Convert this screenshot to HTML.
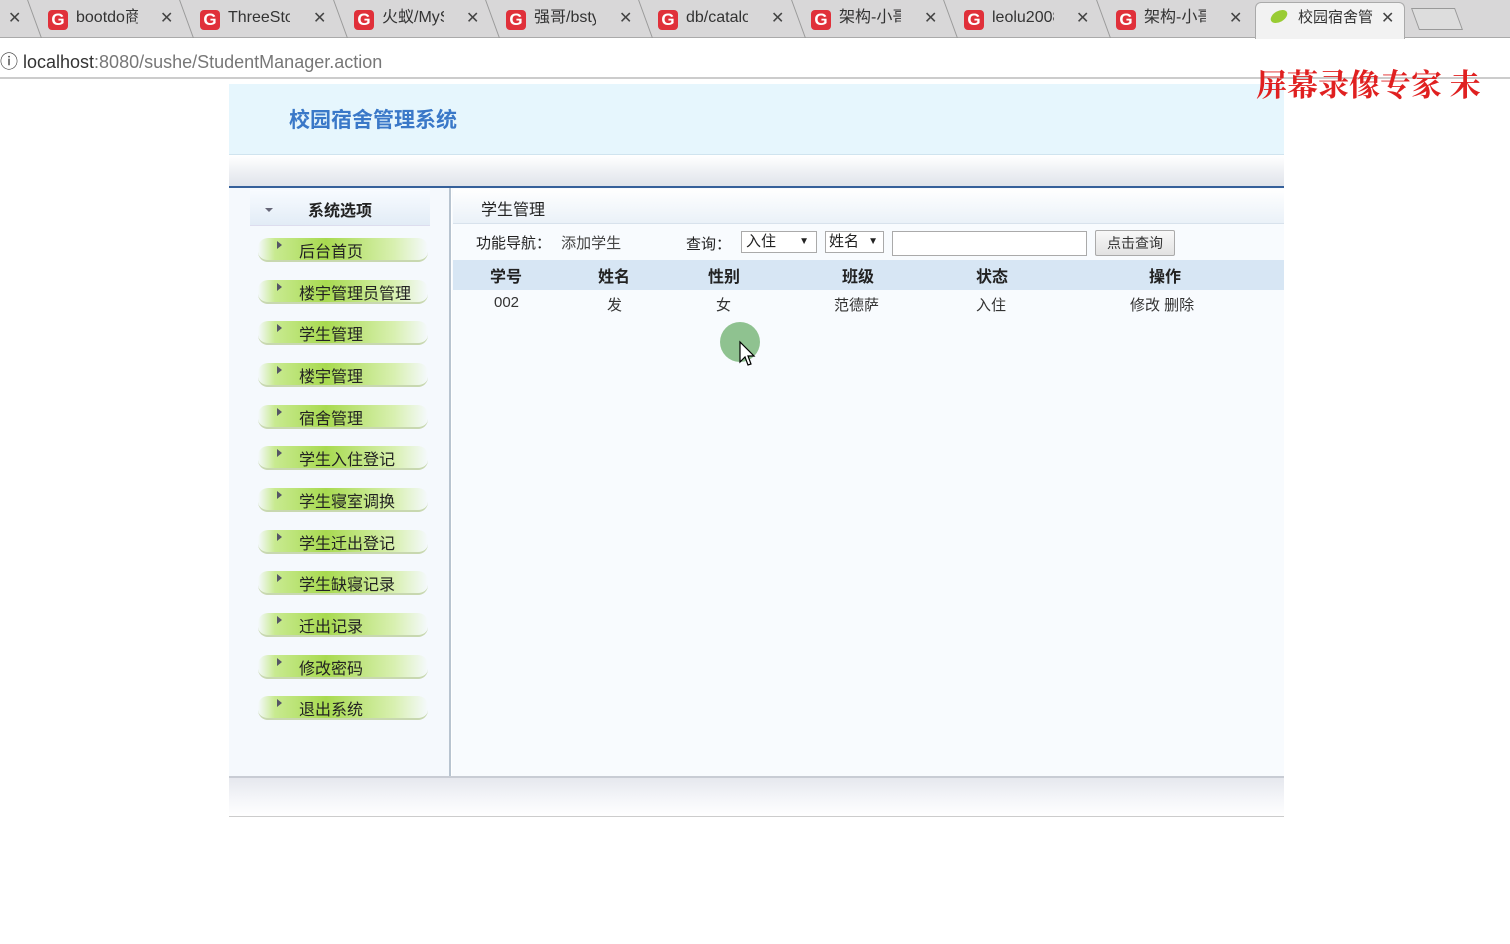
<!DOCTYPE html>
<html><head><meta charset="utf-8"><style>
*{margin:0;padding:0;box-sizing:border-box}
body{width:1510px;height:944px;background:#fff;font-family:"Liberation Sans","Noto Sans CJK SC",sans-serif;position:relative;overflow:hidden;color:#222}
.abs{position:absolute}
.tabbar{left:0;top:0;width:1510px;height:38px;background:#d8d7d8;border-bottom:1px solid #aaa}
.tab{position:absolute;top:4px;height:34px;font-size:16px;color:#333;line-height:28px;white-space:nowrap;width:90px;overflow:hidden}
.g{display:inline-block;width:20px;height:20px;background:#e0303a;border-radius:4px;color:#fff;font-weight:bold;font-size:17px;line-height:20px;text-align:center;vertical-align:-3px;margin-right:8px}
.x{position:absolute;font-size:16px;color:#444}
.sep{position:absolute;top:0;width:1px;height:38px;background:#999;transform:skewX(20deg)}
.addr{left:0;top:39px;width:1510px;height:40px;background:#fff;border-bottom:2px solid #ccc}
.menu{position:absolute;left:258px;width:170px;height:30px;font-size:16px;color:#222}
.menu .bar{position:absolute;left:0;top:4px;width:170px;height:24px;background:linear-gradient(90deg,rgba(255,255,255,0),#c8ea90 10%,#a8da50 40%,#d8f0b0 80%,rgba(255,255,255,0));border-bottom:2px solid #c8d8b0;border-radius:10px}
.menu span{position:absolute;left:41px;top:4px}
.menu i{position:absolute;left:19px;top:7px;width:0;height:0;border-left:5px solid #556;border-top:4px solid transparent;border-bottom:4px solid transparent}
.th{position:absolute;top:263px;font-weight:bold;font-size:16px;color:#222}
.td{position:absolute;top:294px;font-size:15px;color:#333}
</style></head><body>
<div class="abs tabbar">
 <div class="x" style="left:8px;top:8px">✕</div>
 <div class="sep" style="left:34px"></div><div class="sep" style="left:186px"></div><div class="sep" style="left:340px"></div><div class="sep" style="left:492px"></div><div class="sep" style="left:645px"></div><div class="sep" style="left:798px"></div><div class="sep" style="left:950px"></div><div class="sep" style="left:1103px"></div>
 <div class="tab" style="left:48px"><span class="g">G</span>bootdo商</div><div class="x" style="left:160px;top:8px">✕</div>
 <div class="tab" style="left:200px"><span class="g">G</span>ThreeStor</div><div class="x" style="left:313px;top:8px">✕</div>
 <div class="tab" style="left:354px"><span class="g">G</span>火蚁/MyS</div><div class="x" style="left:466px;top:8px">✕</div>
 <div class="tab" style="left:506px"><span class="g">G</span>强哥/bsty</div><div class="x" style="left:619px;top:8px">✕</div>
 <div class="tab" style="left:658px"><span class="g">G</span>db/catalo</div><div class="x" style="left:771px;top:8px">✕</div>
 <div class="tab" style="left:811px"><span class="g">G</span>架构-小哥</div><div class="x" style="left:924px;top:8px">✕</div>
 <div class="tab" style="left:964px"><span class="g">G</span>leolu2008</div><div class="x" style="left:1076px;top:8px">✕</div>
 <div class="tab" style="left:1116px"><span class="g">G</span>架构-小哥</div><div class="x" style="left:1229px;top:8px">✕</div>
 <div style="position:absolute;left:1255px;top:2px;width:150px;height:37px;background:#f2f2f2;border:1px solid #aaa;border-bottom:none;border-radius:6px 6px 0 0"></div>
 <div class="tab" style="left:1270px;font-size:15px;width:105px"><span style="display:inline-block;width:18px;height:11px;background:#9c3;border-radius:50%;transform:rotate(-30deg);margin-right:10px"></span>校园宿舍管</div><div class="x" style="left:1381px;top:8px">✕</div>
 <div style="position:absolute;left:1415px;top:8px;width:44px;height:22px;border:1px solid #999;background:#ddd;transform:skewX(20deg)"></div>
</div>
<div class="abs addr"><div style="position:absolute;left:0;top:9px;font-size:18px;color:#333">ⓘ localhost<span style="color:#777">:8080/sushe/StudentManager.action</span></div></div>
<div class="abs" style="left:229px;top:84px;width:1055px;height:71px;background:#e6f6fd;border-bottom:1px solid #d0e4ef"></div>
<div class="abs" style="left:1256px;top:60px;font-family:'Noto Serif CJK SC',serif;font-size:31px;font-weight:bold;color:#e02020;white-space:nowrap;z-index:5">屏幕录像专家 未</div>
<div class="abs" style="left:289px;top:104px;font-size:21px;color:#3a78c8;font-weight:bold">校园宿舍管理系统</div>
<div class="abs" style="left:229px;top:156px;width:1055px;height:31px;background:linear-gradient(#fff,#eef0f4 50%,#dfe3ea)"></div>
<div class="abs" style="left:229px;top:186px;width:1055px;height:2px;background:#35609a"></div>
<div class="abs" style="left:229px;top:188px;width:222px;height:589px;background:#f5f9fd;border-right:2px solid #b8c4d0"></div>
<div class="abs" style="left:452px;top:188px;width:832px;height:589px;background:#f8fbfe"></div>
<div class="abs" style="left:250px;top:190px;width:180px;height:36px;background:linear-gradient(#f8fbff,#e2ecf6);border-bottom:1px solid #dde"></div>
<div class="abs" style="left:265px;top:208px;width:0;height:0;border-top:4px solid #667;border-left:4px solid transparent;border-right:4px solid transparent"></div>
<div class="abs" style="left:308px;top:197px;font-size:16px;font-weight:bold">系统选项</div>
<div class="menu" style="top:234px"><div class="bar"></div><i></i><span>后台首页</span></div>
<div class="menu" style="top:276px"><div class="bar"></div><i></i><span>楼宇管理员管理</span></div>
<div class="menu" style="top:317px"><div class="bar"></div><i></i><span>学生管理</span></div>
<div class="menu" style="top:359px"><div class="bar"></div><i></i><span>楼宇管理</span></div>
<div class="menu" style="top:401px"><div class="bar"></div><i></i><span>宿舍管理</span></div>
<div class="menu" style="top:442px"><div class="bar"></div><i></i><span>学生入住登记</span></div>
<div class="menu" style="top:484px"><div class="bar"></div><i></i><span>学生寝室调换</span></div>
<div class="menu" style="top:526px"><div class="bar"></div><i></i><span>学生迁出登记</span></div>
<div class="menu" style="top:567px"><div class="bar"></div><i></i><span>学生缺寝记录</span></div>
<div class="menu" style="top:609px"><div class="bar"></div><i></i><span>迁出记录</span></div>
<div class="menu" style="top:651px"><div class="bar"></div><i></i><span>修改密码</span></div>
<div class="menu" style="top:692px"><div class="bar"></div><i></i><span>退出系统</span></div>
<div class="abs" style="left:453px;top:189px;width:831px;height:35px;background:linear-gradient(#fff,#eaf1f8);border-bottom:1px solid #d8e2ec"></div>
<div class="abs" style="left:481px;top:196px;font-size:16px">学生管理</div>
<div class="abs" style="left:476px;top:232px;font-size:15px">功能导航： <span style="margin-left:6px;color:#444">添加学生</span></div>
<div class="abs" style="left:686px;top:233px;font-size:15px">查询：</div>
<div class="abs" style="left:741px;top:231px;width:76px;height:22px;border:1px solid #aaa;background:#fff;font-size:15px;padding-left:4px;line-height:20px">入住<span style="position:absolute;right:7px;font-size:10px">▼</span></div>
<div class="abs" style="left:825px;top:231px;width:59px;height:22px;border:1px solid #aaa;background:#fff;font-size:15px;padding-left:3px;line-height:20px">姓名<span style="position:absolute;right:5px;font-size:10px">▼</span></div>
<div class="abs" style="left:892px;top:231px;width:195px;height:25px;border:1px solid #aaa;background:#fff"></div>
<div class="abs" style="left:1095px;top:230px;width:80px;height:26px;border:1px solid #aaa;border-radius:2px;background:linear-gradient(#f8f8f8,#e2e2e2);font-size:14px;text-align:center;line-height:24px;color:#333">点击查询</div>
<div class="abs" style="left:453px;top:260px;width:831px;height:30px;background:#d7e6f4"></div>
<div class="th" style="left:490px">学号</div><div class="th" style="left:598px">姓名</div><div class="th" style="left:708px">性别</div><div class="th" style="left:842px">班级</div><div class="th" style="left:976px">状态</div><div class="th" style="left:1149px">操作</div>
<div class="td" style="left:494px">002</div><div class="td" style="left:607px">发</div><div class="td" style="left:716px">女</div><div class="td" style="left:834px">范德萨</div><div class="td" style="left:976px">入住</div><div class="td" style="left:1130px">修改 删除</div>
<div class="abs" style="left:720px;top:322px;width:40px;height:40px;border-radius:50%;background:#7cb77c;opacity:.85"></div>
<svg class="abs" style="left:738px;top:340px" width="18" height="28"><path d="M2 2 L2 22 L7 17 L10 25 L13 24 L10 16 L16 16 Z" fill="#fff" stroke="#000" stroke-width="1.2"/></svg>
<div class="abs" style="left:229px;top:776px;width:1055px;height:2px;background:#c8ccd4"></div>
<div class="abs" style="left:229px;top:778px;width:1055px;height:39px;background:linear-gradient(#e6e8ee,#f6f7fa 60%,#fff)"></div>
<div class="abs" style="left:229px;top:816px;width:1055px;height:1px;background:#ccc"></div>
</body></html>
